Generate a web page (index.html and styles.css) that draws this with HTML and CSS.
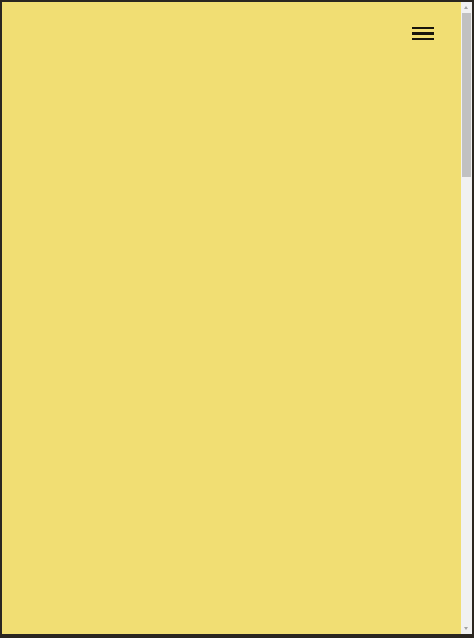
FILE: index.html
```html
<!DOCTYPE html>
<html>
<head>
<meta charset="utf-8">
<link rel="stylesheet" href="styles.css">
</head>
<body>
<div class="frame">
  <main class="page">
    <header class="topbar">
      <button class="menu" aria-label="Menu">
        <span class="bar"></span>
        <span class="bar"></span>
        <span class="bar"></span>
      </button>
    </header>
  </main>
  <div class="scrollbar">
    <div class="arrow up"></div>
    <div class="track"><div class="thumb"></div></div>
    <div class="arrow down"></div>
  </div>
</div>
</body>
</html>
```
FILE: styles.css
```css
html, body {
  margin: 0;
  padding: 0;
  height: 100%;
}
body {
  background: #2a2620;
  font-family: "Liberation Sans", Arial, sans-serif;
  overflow: hidden;
}
.frame {
  display: flex;
  height: 632px;
  margin: 2px 2px 4px 2px;
}
.page {
  flex: 1;
  background: #f1de73;
}
.topbar {
  display: flex;
  justify-content: flex-end;
  padding: 24.5px 27px 0 0;
}
.menu {
  display: flex;
  flex-direction: column;
  gap: 3px;
  padding: 0;
  border: 0;
  background: none;
  width: 22px;
}
.bar {
  display: block;
  height: 2.5px;
  width: 22px;
  background: #17140c;
}
.scrollbar {
  width: 11px;
  background: #f1f1f1;
  display: flex;
  flex-direction: column;
}
.arrow {
  height: 11px;
  position: relative;
}
.arrow::after {
  content: "";
  position: absolute;
  left: 3px;
  border-left: 2.5px solid transparent;
  border-right: 2.5px solid transparent;
}
.arrow.up::after {
  top: 4px;
  border-bottom: 3px solid #a3a3a3;
}
.arrow.down::after {
  top: 4px;
  border-top: 3px solid #a3a3a3;
}
.track {
  flex: 1;
  padding: 0 1px;
}
.thumb {
  height: 164px;
  background: #c1c1c1;
}
```
